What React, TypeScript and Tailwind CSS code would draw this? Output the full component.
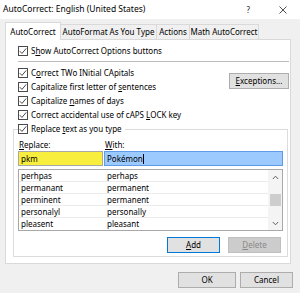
import React from 'react';

const rows = [
    ['perhpas', 'perhaps'],
    ['permanant', 'permanent'],
    ['perminent', 'permanent'],
    ['personalyl', 'personally'],
    ['pleasent', 'pleasant'],
];

function Check() {
    return (
        <span className="w-[10px] h-[10px] border border-[#4a4a4a] bg-white flex items-center justify-center shrink-0">
            <svg width="8" height="8" viewBox="0 0 8 8">
                <path d="M0.8 4.2 L3 6.4 L7.2 1.4" fill="none" stroke="#333" strokeWidth="0.9" />
            </svg>
        </span>
    );
}

function CheckRow({ children }: { children: React.ReactNode }) {
    return (
        <div className="h-[14px] flex items-center gap-[3px]">
            <Check />
            <span>{children}</span>
        </div>
    );
}

export default function App() {
    return (
        <div
            className="w-[300px] h-[293px] bg-[#f0f0f0] flex flex-col text-[8px] text-black overflow-hidden leading-none"
            style={{ fontFamily: '"Noto Sans", "Open Sans", sans-serif' }}
        >
            {/* title bar */}
            <div className="h-[19px] bg-white flex items-center pl-[3px] pr-[13px] shrink-0">
                <span className="text-[8.5px]">AutoCorrect: English (United States)</span>
                <span className="ml-auto text-[8px] text-[#222]">?</span>
                <svg className="ml-[29px]" width="8" height="8" viewBox="0 0 8 8">
                    <path d="M0.5 0.5 L7.5 7.5 M7.5 0.5 L0.5 7.5" stroke="#222" strokeWidth="0.8" />
                </svg>
            </div>

            {/* tabs */}
            <div className="mt-[3px] ml-[5px] flex items-end h-[17px] shrink-0">
                <div className="w-[56px] h-[18px] bg-white border border-b-0 border-[#d9d9d9] flex items-center justify-center relative z-10 -mb-px">
                    AutoCorrect
                </div>
                <div className="w-[97px] h-[15px] border border-b-0 border-[#d9d9d9] flex items-center justify-center -ml-px">
                    AutoFormat As You Type
                </div>
                <div className="w-[34px] h-[15px] border border-b-0 border-[#d9d9d9] flex items-center justify-center -ml-px">
                    Actions
                </div>
                <div className="w-[70px] h-[15px] border border-b-0 border-[#d9d9d9] flex items-center justify-center -ml-px">
                    Math AutoCorrect
                </div>
            </div>

            {/* panel */}
            <div className="ml-[5px] w-[286px] h-[225px] bg-white border border-[#d9d9d9] flex flex-col shrink-0">
                <div className="mt-[4px] ml-[12px]">
                    <CheckRow>
                        S<u>h</u>ow AutoCorrect Options buttons
                    </CheckRow>
                </div>
                <div className="mt-[3px] ml-[12px] mr-[1px] h-px bg-[#bdbdbd]" />

                <div className="mt-[4px] ml-[12px] mr-[1px] flex">
                    <div className="flex flex-col">
                        <CheckRow>
                            C<u>o</u>rrect TWo INitial CApitals
                        </CheckRow>
                        <CheckRow>
                            Capitalize first letter of <u>s</u>entences
                        </CheckRow>
                        <CheckRow>
                            Capitalize <u>n</u>ames of days
                        </CheckRow>
                        <CheckRow>
                            Correct accidental use of cAPS <u>L</u>OCK key
                        </CheckRow>
                    </div>
                    <button className="ml-auto mt-[7px] w-[60px] h-[16px] bg-[#e1e1e1] border border-[#adadad] flex items-center justify-center">
                        <span>
                            <u>E</u>xceptions...
                        </span>
                    </button>
                </div>

                <fieldset className="ml-[7px] mr-[2px] border border-[#dcdcdc] px-[4px] pb-[3px]">
                    <legend className="pr-[3px] bg-white">
                        <CheckRow>
                            Replace <u>t</u>ext as you type
                        </CheckRow>
                    </legend>

                    <div className="mt-[3px] h-[12px] flex items-center">
                        <span className="w-[87px] pl-[1px]">
                            <u>R</u>eplace:
                        </span>
                        <span>
                            <u>W</u>ith:
                        </span>
                    </div>

                    <div className="flex gap-[1px] h-[15px]">
                        <div className="w-[85px] bg-[#f8ee3e] border border-[#a8a8a8] flex items-center pl-[2px]">pkm</div>
                        <div className="flex-1 bg-[#9ccaff] border border-[#5d9be6] flex items-center pl-[2px]">
                            <span>Pokémon</span>
                            <span className="w-px h-[10px] bg-black" />
                        </div>
                    </div>

                    <div className="mt-[3px] h-[62px] border border-[#a8a8a8] flex">
                        <div className="flex-1 flex flex-col">
                            {rows.map(([a, b]) => (
                                <div key={a} className="h-[12px] flex items-center border-b border-[#ececec] last:border-b-0">
                                    <span className="w-[86px] pl-[2px]">{a}</span>
                                    <span className="pl-[2px]">{b}</span>
                                </div>
                            ))}
                        </div>
                        <div className="w-[14px] bg-[#f4f4f4] flex flex-col items-center">
                            <svg className="mt-[5px]" width="7" height="5" viewBox="0 0 7 5">
                                <path d="M0.8 4 L3.5 1.2 L6.2 4" fill="none" stroke="#606060" strokeWidth="1" />
                            </svg>
                            <div className="mt-[14px] w-[11px] h-[12px] bg-[#cdcdcd]" />
                            <svg className="mt-auto mb-[4px]" width="7" height="5" viewBox="0 0 7 5">
                                <path d="M0.8 1 L3.5 3.8 L6.2 1" fill="none" stroke="#606060" strokeWidth="1" />
                            </svg>
                        </div>
                    </div>

                    <div className="mt-[6px] pr-[2px] flex justify-end gap-[8px]">
                        <button className="w-[53px] h-[16px] bg-[#e1e1e1] border border-[#0078d7] flex items-center justify-center">
                            <span>
                                <u>A</u>dd
                            </span>
                        </button>
                        <button className="w-[53px] h-[16px] bg-[#cccccc] border border-[#bfbfbf] text-[#8a8a8a] flex items-center justify-center">
                            <span>
                                <u>D</u>elete
                            </span>
                        </button>
                    </div>
                </fieldset>
            </div>

            {/* footer */}
            <div className="mt-[8px] pr-[7px] flex justify-end gap-[4px]">
                <button className="w-[58px] h-[16px] bg-[#e1e1e1] border border-[#adadad] flex items-center justify-center">OK</button>
                <button className="w-[53px] h-[16px] bg-[#e1e1e1] border border-[#adadad] flex items-center justify-center">Cancel</button>
            </div>
        </div>
    );
}
